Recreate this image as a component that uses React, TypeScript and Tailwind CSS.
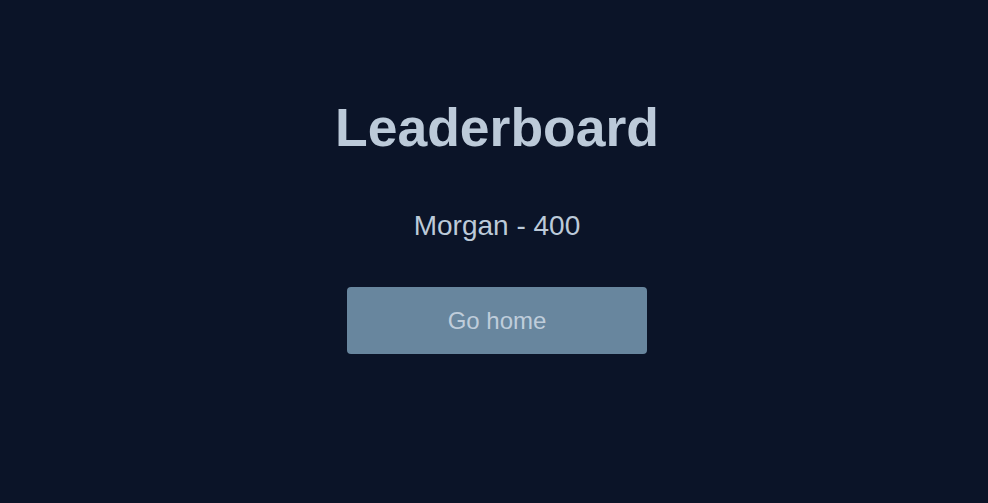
export default function App() {
  return (
    <div
      className="min-h-screen w-full bg-[#0b1428] flex flex-col items-center pl-[6px]"
      style={{ fontFamily: '"Liberation Sans", Arial, sans-serif' }}
    >
      <h1 className="mt-[98px] text-[53.5px] leading-[60px] font-bold text-[#bccad9]">Leaderboard</h1>
      <p className="mt-[52px] text-[28px] leading-[32px] text-[#bccad9]">Morgan - 400</p>
      <button className="mt-[45px] w-[300px] h-[67px] rounded-[4px] bg-[#68869e] text-[#bfcddb] text-[24px] flex items-center justify-center">
        Go home
      </button>
    </div>
  );
}
